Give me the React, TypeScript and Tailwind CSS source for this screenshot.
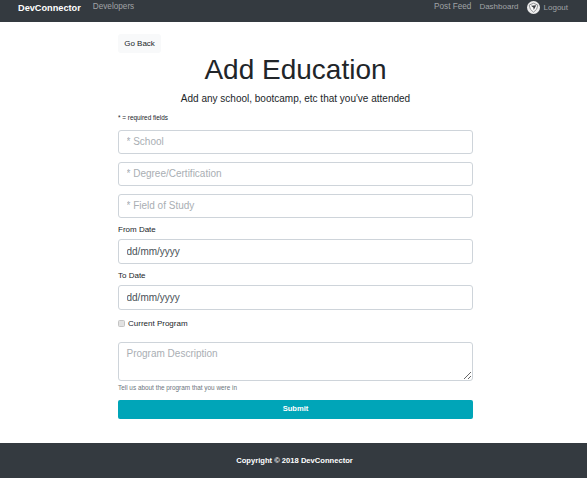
const inputClass =
  "block w-full h-[24px] rounded-[3px] border border-[#ced4da] bg-white px-[7.5px] pb-[1px] text-[10px] text-[#495057] placeholder:text-[#a9aeb3] outline-none";

function Avatar() {
  return (
    <svg width="13" height="13" viewBox="0 0 14 14" className="shrink-0">
      <circle cx="7" cy="7" r="7" fill="#ececec" />
      <path d="M2.4 4.4 L7 2.4 L11.6 4.4 L10.4 8.8 L7 12 L3.6 8.8 Z" fill="#fbfbfb" stroke="#6a6d72" strokeWidth="0.8" />
      <path d="M4.2 5.2 L10 4.6 L7.3 9.6 L6.8 6.9 Z" fill="#3a3d42" />
    </svg>
  );
}

function Field({ placeholder }: { placeholder: string }) {
  return <input type="text" placeholder={placeholder} className={inputClass} />;
}

function DateField({ label }: { label: string }) {
  return (
    <div className="flex flex-col">
      <label className="mb-[2px] h-[14px] text-[8px] leading-[14px] text-[#212529]">{label}</label>
      <input type="text" readOnly value="dd/mm/yyyy" className="block h-[25px] w-full rounded-[3px] border border-[#ced4da] bg-white px-[7.5px] text-[10px] text-[#495057] outline-none" />
    </div>
  );
}

export default function App() {
  return (
    <div className="flex h-[478px] flex-col bg-white font-['Liberation_Sans',Arial,sans-serif] text-[#212529]">
      <nav className="flex h-[22px] shrink-0 items-start justify-between bg-[#343a40] pl-[18px] pr-[19px]">
        <div className="flex items-center gap-[12px]">
          <a className="mt-[2px] text-[9.2px] font-bold leading-[12px] text-white">DevConnector</a>
          <a className="text-[8.2px] leading-[12px] text-[#a0a3a6]">Developers</a>
        </div>
        <div className="flex items-center">
          <a className="text-[8.2px] leading-[12px] text-[#a0a3a6]">Post Feed</a>
          <a className="ml-[8px] text-[8px] leading-[12px] text-[#a0a3a6]">Dashboard</a>
          <div className="ml-[8px] mt-[1px] flex items-center gap-[4px]">
            <Avatar />
            <a className="text-[8px] leading-[12px] text-[#a0a3a6]">Logout</a>
          </div>
        </div>
      </nav>

      <main className="ml-[118px] w-[355px] flex-1">
        <button className="mt-[12px] block h-[19px] w-[43px] rounded-[3px] bg-[#f8f9fa] text-[8px] text-[#212529]">Go Back</button>
        <h1 className="mt-[1px] text-center text-[28px] leading-[32px] text-[#212529]">Add Education</h1>
        <p className="mt-[6px] text-center text-[10px] leading-[14px]">Add any school, bootcamp, etc that you've attended</p>
        <small className="mt-[7px] block h-[9px] text-[6.4px] leading-[9px] text-[#212529]">* = required fields</small>

        <form className="mt-[8px] flex flex-col">
          <div className="flex flex-col gap-[8px]">
            <Field placeholder="* School" />
            <Field placeholder="* Degree/Certification" />
            <Field placeholder="* Field of Study" />
          </div>
          <div className="mt-[5px]">
            <DateField label="From Date" />
          </div>
          <div className="mt-[5px]">
            <DateField label="To Date" />
          </div>
          <div className="mt-[8px] flex h-[11px] items-center">
            <input type="checkbox" className="m-0 h-[7px] w-[7px] appearance-none rounded-[1.5px] border border-[#c4c4c4] bg-[#e2e2e2]" />
            <label className="ml-[3px] text-[8px] leading-[11px] text-[#212529]">Current Program</label>
          </div>
          <textarea placeholder="Program Description" className="mt-[13px] block h-[39px] w-full rounded-[3px] border border-[#ced4da] bg-white px-[7.5px] py-[4px] text-[10px] leading-[14px] placeholder:text-[#a9aeb3] outline-none" />
          <small className="mt-[2px] block h-[9px] text-[6.4px] leading-[9px] text-[#6c757d]">Tell us about the program that you were in</small>
          <button type="button" className="mt-[8px] block h-[19px] w-full rounded-[2px] bg-[#00a5b8] pb-[1px] text-[7.6px] font-bold text-white">Submit</button>
        </form>
      </main>

      <footer className="flex h-[35px] shrink-0 items-center justify-center bg-[#343a40] pl-[2px] text-[7.6px] font-bold text-white">
        Copyright © 2018 DevConnector
      </footer>
    </div>
  );
}
